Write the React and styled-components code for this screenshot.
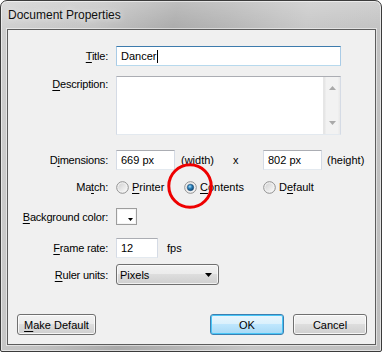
import React from "react";
import styled, { createGlobalStyle } from "styled-components";

const GlobalStyle = createGlobalStyle`
  html, body { margin: 0; padding: 0; background: #fff; }
  body {
    font-family: "Liberation Sans", Arial, sans-serif;
    font-size: 11px;
    color: #000;
  }
  * { box-sizing: border-box; }
`;

const Window = styled.div`
  position: relative;
  width: 382px;
  height: 352px;
  border: 1px solid #3b3b3b;
  border-radius: 7px 7px 2px 2px;
  background:
    linear-gradient(180deg, rgba(255,255,255,0.25) 0%, rgba(255,255,255,0) 9%),
    linear-gradient(100deg, #cfcfcf 0%, #c2c2c2 22%, #a9a9a9 40%, #b3b3b3 52%, #c6c6c6 70%, #bdbdbd 100%);
  box-shadow: inset 0 0 0 1px rgba(255,255,255,0.55);
  padding: 0 5px 6px 6px;
  display: flex;
  flex-direction: column;
`;

const TitleBar = styled.div`
  height: 28px;
  display: flex;
  align-items: center;
  padding-left: 1px;
  padding-bottom: 1px;
  font-size: 12px;
  color: #101010;
  text-shadow: 0 0 6px rgba(255,255,255,0.9);
`;

const Client = styled.div`
  flex: 1;
  display: flex;
  flex-direction: column;
  background: #f0f0f0;
  border: 1px solid #5c5c5c;
  box-shadow: 0 0 0 1px rgba(255,255,255,0.5);
  padding: 16px 0 9px 0;
`;

const Row = styled.div`
  display: grid;
  grid-template-columns: 100px 1fr;
  column-gap: 8px;
  align-items: ${(p) => (p.$top ? "start" : "center")};
  margin-top: ${(p) => p.$mt || 0}px;
  padding-right: 34px;
  min-height: ${(p) => p.$h}px;
`;

const Label = styled.div`
  text-align: right;
  white-space: nowrap;
  line-height: 14px;
  letter-spacing: -0.2px;
  padding-top: ${(p) => (p.$top ? 1 : 0)}px;
`;

const U = styled.span`
  text-decoration: underline;
  text-underline-offset: 2px;
`;

const Controls = styled.div`
  display: flex;
  align-items: center;
  height: ${(p) => p.$h}px;
`;

const TextBox = styled.div`
  width: ${(p) => (p.$w ? `${p.$w}px` : "100%")};
  height: 20px;
  background: #fff;
  border: 1px solid ${(p) => (p.$focus ? "#a9cbe6" : "#d5dbe5")};
  border-top-color: ${(p) => (p.$focus ? "#3d7bad" : "#abadb3")};
  border-bottom-color: ${(p) => (p.$focus ? "#b7d9ed" : "#e3e9ef")};
  display: flex;
  align-items: center;
  padding-left: 4px;
  white-space: nowrap;
`;

const Caret = styled.span`
  display: inline-block;
  width: 1px;
  height: 13px;
  background: #000;
  margin-left: 1px;
`;

const TextArea = styled.div`
  height: 59px;
  background: #fff;
  border: 1px solid #d5dbe5;
  border-top-color: #abadb3;
  border-bottom-color: #e3e9ef;
  display: flex;
  justify-content: flex-end;
`;

const ScrollBar = styled.div`
  width: 17px;
  background: linear-gradient(90deg, #e3e3e3 0%, #f2f2f2 15%, #f2f2f2 85%, #e8e8e8 100%);
  border-left: 1px solid #e6e6e6;
  display: flex;
  flex-direction: column;
  justify-content: space-between;
  align-items: center;
  padding: 9px 0 9px;
`;

const Unit = styled.span`
  margin-left: ${(p) => p.$ml || 0}px;
  width: ${(p) => (p.$w ? `${p.$w}px` : "auto")};
  white-space: nowrap;
`;

const RadioOption = styled.label`
  display: flex;
  align-items: center;
  gap: 3px;
  width: ${(p) => p.$w}px;
  white-space: nowrap;
`;

const Swatch = styled.div`
  width: 21px;
  height: 17px;
  background: #fff;
  border: 1px solid #9d9d9d;
  box-shadow: inset 0 0 0 1px #f4f4f4;
  display: flex;
  align-items: flex-end;
  justify-content: flex-end;
  padding: 0 3px 3px 0;
`;

const Select = styled.div`
  width: 103px;
  height: 21px;
  border: 1px solid #707070;
  border-radius: 3px;
  background: linear-gradient(180deg, #f2f2f2 0%, #ebebeb 49%, #dddddd 50%, #cfcfcf 100%);
  box-shadow: inset 0 0 0 1px rgba(255,255,255,0.7);
  display: flex;
  align-items: center;
  justify-content: space-between;
  padding: 0 6px 0 3px;
`;

const Footer = styled.div`
  margin-top: auto;
  display: flex;
  align-items: center;
  padding: 0 8px 0 9px;
`;

const Spacer = styled.div`
  flex: 1;
`;

const Button = styled.button`
  font: inherit;
  color: #000;
  width: ${(p) => p.$w}px;
  height: 21px;
  margin-left: ${(p) => p.$ml || 0}px;
  padding: 0;
  border-radius: 3px;
  border: 1px solid ${(p) => (p.$default ? "#3c7fb1" : "#707070")};
  background: ${(p) =>
    p.$default
      ? "linear-gradient(180deg, #eaf6fd 0%, #d9f0fc 49%, #bee6fd 50%, #a7d9f5 100%)"
      : "linear-gradient(180deg, #f2f2f2 0%, #ebebeb 49%, #dddddd 50%, #cfcfcf 100%)"};
  box-shadow: inset 0 0 0 1px ${(p) => (p.$default ? "#48c6f7" : "rgba(255,255,255,0.8)")};
  display: flex;
  align-items: center;
  justify-content: center;
`;

const Annotation = styled.svg`
  position: absolute;
  left: 162px;
  top: 158px;
  pointer-events: none;
`;

const Radio = ({ checked }) => (
  <svg width="13" height="13" viewBox="0 0 13 13">
    <defs>
      <linearGradient id="rg-o" x1="0" y1="0" x2="1" y2="1">
        <stop offset="0" stopColor="#d2d2d2" />
        <stop offset="1" stopColor="#f9f9f9" />
      </linearGradient>
      <radialGradient id="rg-c" cx="0.4" cy="0.35" r="0.7">
        <stop offset="0" stopColor="#a5e0fa" />
        <stop offset="0.45" stopColor="#2b80b9" />
        <stop offset="1" stopColor="#0d3c63" />
      </radialGradient>
    </defs>
    <circle cx="6.5" cy="6.5" r="5.8" fill="#f4f4f4" stroke="#8f8f8f" strokeWidth="1" />
    <circle cx="6.5" cy="6.5" r="4.3" fill="url(#rg-o)" />
    {checked && <circle cx="6.5" cy="6.5" r="3.2" fill="url(#rg-c)" stroke="#1d4f7c" strokeWidth="0.6" />}
  </svg>
);

const Arrow = ({ up, color = "#000", w = 7, h = 4 }) => (
  <svg width={w} height={h} viewBox={`0 0 ${w} ${h}`}>
    <polygon
      points={up ? `0,${h} ${w},${h} ${w / 2},0` : `0,0 ${w},0 ${w / 2},${h}`}
      fill={color}
    />
  </svg>
);

export default function App() {
  return (
    <>
      <GlobalStyle />
      <Window>
        <TitleBar>Document Properties</TitleBar>
        <Client>
          <Row $h={20}>
            <Label><U>T</U>itle:</Label>
            <TextBox $focus>
              Dancer<Caret />
            </TextBox>
          </Row>
          <Row $top $mt={10} $h={59}>
            <Label $top><U>D</U>escription:</Label>
            <TextArea>
              <ScrollBar>
                <Arrow up color="#a9a9a9" />
                <Arrow color="#a9a9a9" />
              </ScrollBar>
            </TextArea>
          </Row>
          <Row $mt={15} $h={20}>
            <Label>D<U>i</U>mensions:</Label>
            <Controls $h={20}>
              <TextBox $w={59}>669 px</TextBox>
              <Unit $ml={6} $w={52}>(width)</Unit>
              <Unit $w={30}>x</Unit>
              <TextBox $w={59}>802 px</TextBox>
              <Unit $ml={5}>(height)</Unit>
            </Controls>
          </Row>
          <Row $mt={8} $h={18}>
            <Label>Ma<U>t</U>ch:</Label>
            <Controls $h={18}>
              <RadioOption $w={68}>
                <Radio />
                <span><U>P</U>rinter</span>
              </RadioOption>
              <RadioOption $w={79}>
                <Radio checked />
                <span><U>C</U>ontents</span>
              </RadioOption>
              <RadioOption $w={60}>
                <Radio />
                <span>D<U>e</U>fault</span>
              </RadioOption>
            </Controls>
          </Row>
          <Row $mt={12} $h={17}>
            <Label><U>B</U>ackground color:</Label>
            <Controls $h={17}>
              <Swatch>
                <Arrow w={5} h={3} />
              </Swatch>
            </Controls>
          </Row>
          <Row $mt={13} $h={20}>
            <Label><U>F</U>rame rate:</Label>
            <Controls $h={20}>
              <TextBox $w={42}>12</TextBox>
              <Unit $ml={9}>fps</Unit>
            </Controls>
          </Row>
          <Row $mt={6} $h={21}>
            <Label><U>R</U>uler units:</Label>
            <Controls $h={21}>
              <Select>
                <span>Pixels</span>
                <Arrow />
              </Select>
            </Controls>
          </Row>
          <Footer>
            <Button $w={79}><U>M</U>ake Default</Button>
            <Spacer />
            <Button $w={74} $default>OK</Button>
            <Button $w={74} $ml={9}>Cancel</Button>
          </Footer>
        </Client>
        <Annotation width="54" height="54" viewBox="0 0 54 54">
          <circle cx="27" cy="27" r="21.2" fill="none" stroke="#ee0000" strokeWidth="3" />
        </Annotation>
      </Window>
    </>
  );
}
